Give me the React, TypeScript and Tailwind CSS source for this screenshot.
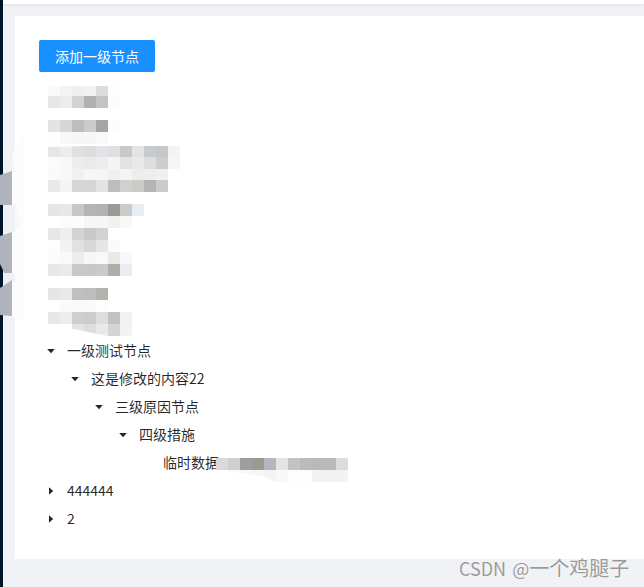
type TreeRow = {
  title: string;
  level: number;
  caret?: "down" | "right";
};

// each mosaic strip: top offset inside the blur block, then cell colours (12px wide)
const mosaicRows: { y: number; h?: number; cells: string[] }[] = [
  { y: 1, cells: ["#fafafa", "#f4f4f4", "#efefef", "#f1f2f3", "#dcdcdc", "#fdfdfe"] },
  { y: 11, cells: ["#e7e7e7", "#ececea", "#d3d2d1", "#b0b1b5", "#c3c3c5", "#fcfcfd"] },
  { y: 35, cells: ["#e4e4e4", "#d8d5d7", "#bcbdbc", "#cbccca", "#a5a5a7", "#fbfcfe"] },
  { y: 47, cells: ["#fefefe", "#f8f8f6", "#f6f6f6", "#f6f7f7", "#f9f9f9"] },
  { y: 61, h: 11, cells: ["#e6e6e6", "#eeecee", "#e0e0e1", "#dddcdb", "#e1e3e6", "#e1e0df", "#c9c9c9", "#e3e4e4", "#c8cbce", "#cac8c6", "#f3f4f6"] },
  { y: 72, cells: ["#fbfbfb", "#f9f8f9", "#ededed", "#ebeae9", "#ededef", "#f4f5f5", "#e2e3e4", "#e9e9e7", "#dcdee1", "#cfcdcb", "#f5f6f7"] },
  { y: 84, cells: ["#fafafa", "#f8f8f8", "#f0f0f0", "#f6f6f5", "#f5f5f3", "#f0f0f0", "#f4f4f2", "#eeedeb", "#edeeed", "#f0f0f2"] },
  { y: 95, cells: ["#e9e9e9", "#f4f4f2", "#d6d6d6", "#d8d6d5", "#e3e4e6", "#bcbebd", "#d2d0ce", "#cdcbc6", "#b4b4b4", "#c9ccce"] },
  { y: 119, cells: ["#e6e6e6", "#e9e8e7", "#c8c7c5", "#b3b3b8", "#b3b1b1", "#9b9a96", "#cbcbc8", "#e6eef3"] },
  { y: 131, cells: ["#ffffff", "#fbfbfb", "#fcfcfa", "#f6f6f6", "#f6f6f6", "#f1f1f1", "#f8f8f8"] },
  { y: 143, cells: ["#e8e8e8", "#f0eff0", "#d3d3d3", "#c8c9cb", "#d2d2d1"] },
  { y: 155, cells: ["#fdfdfd", "#f3f3f2", "#e1e1e1", "#d8d8d9", "#e6e7e4", "#f8fafb"] },
  { y: 167, cells: ["#fcfcfc", "#f9f9f8", "#eceded", "#f6f7f7", "#f9f9f9", "#eae9e9", "#f6f8fa"] },
  { y: 179, cells: ["#e8e8e8", "#ebebeb", "#c9c9c9", "#c8c8c8", "#c9caca", "#aeaea9", "#e9edf0"] },
  { y: 203, cells: ["#e6e6e6", "#e9e9e8", "#c1bfbd", "#bdbdc0", "#b4b2ae"] },
  { y: 215, cells: ["#ffffff", "#fafafa", "#f8f9f9", "#f9f9f8", "#fdfdfd"] },
  { y: 227, cells: ["#e8e8e8", "#eeedee", "#cfcecf", "#cbcccd", "#dcdddc", "#c3c2c0", "#f0f3f5"] },
  { y: 239, cells: ["#ffffff", "#fefefe", "#e3e4e5", "#dcddde", "#e8e9e9", "#d5d5d4", "#f1f3f5"] },
];

const leafCells = ["#dadadc", "#cfcfcd", "#9e9ea0", "#9b9992", "#b7b6bc", "#e4e4e4", "#c3c3c4", "#bbbcb8", "#bbb9b5", "#bababc", "#dcdcde"];
const leafCellsBottom = ["#fbfbfb", "#f8f8f8", "#f8f8f8", "#f6f6f6", "#f3f3f3", "#f7f8f8", "#fdfdfd", "#fcfdfd", "#f3f3f3", "#f2f2f2", "#f3f3f3"];

const rows: TreeRow[] = [
  { title: "一级测试节点", level: 0, caret: "down" },
  { title: "这是修改的内容22", level: 1, caret: "down" },
  { title: "三级原因节点", level: 2, caret: "down" },
  { title: "四级措施", level: 3, caret: "down" },
  { title: "临时数据", level: 4 },
  { title: "444444", level: 0, caret: "right" },
  { title: "2", level: 0, caret: "right" },
];

const Caret = ({ dir }: { dir: "down" | "right" }) => (
  <svg width="10" height="10" viewBox="0 0 10 10" className="fill-[#262626]">
    {dir === "down" ? <path d="M1.2 3 H8.8 L5 7.2 Z" /> : <path d="M3 1.2 V8.8 L7.2 5 Z" />}
  </svg>
);

const Mosaic = () => (
  <svg width="156" height="252" viewBox="0 0 156 252" className="block">
    <g shapeRendering="crispEdges">
      {mosaicRows.map((row) =>
        row.cells.map((c, i) => (
          <rect key={`${row.y}-${i}`} x={i * 12} y={row.y} width="12" height={row.h ?? 12} fill={c} />
        ))
      )}
    </g>
    {/* the white retouch edges that cut into the blur */}
    <path d="M0 60 L36 60 L36 61 L0 62 Z" fill="#ffffff" />
    <path d="M0 239 L60 251 L60 253 L0 253 Z" fill="#ffffff" />
    <path d="M96 131 L78 143 H96 Z" fill="#ffffff" />
  </svg>
);

const LeafMosaic = () => (
  <svg width="132" height="24" viewBox="0 0 132 24" className="block">
    <g shapeRendering="crispEdges">
      {leafCells.map((c, i) => (
        <rect key={i} x={i * 12} y="0" width="12" height="12" fill={c} />
      ))}
      {leafCellsBottom.map((c, i) => (
        <rect key={i} x={i * 12} y="12" width="12" height="12" fill={c} />
      ))}
    </g>
    <path d="M0 12 L48 18 L60 24 H0 Z" fill="#ffffff" />
  </svg>
);

// smeared edits sitting over the sidebar edge, drawn in page coordinates
const Smears = () => (
  <svg width="26" height="330" viewBox="0 0 26 330" className="absolute left-0 top-0">
    <path d="M24 135 L12 155 L13 165 L15 172 H12 V316 L24 320 Z" fill="#fcfcfd" />
    <path d="M3 205 H15 V232 H3 Z" fill="#eff1f5" />
    <path d="M15 205 L22 222 L15 232 Z" fill="#f7f8fa" />
    <path d="M0 175 L12 171 V205 H0 Z" fill="#aeb4ba" />
    <path d="M0 236 L12 232 V273 L5 275 L2 268 L0 264 Z" fill="#aeb4ba" />
    <path d="M3 273 H15 V282 H3 Z" fill="#eff1f5" />
    <path d="M0 288 L12 280 V316 L0 315 Z" fill="#aeb4ba" />
  </svg>
);

export default function App() {
  return (
    <div className="relative flex h-[587px] overflow-hidden bg-[#f0f2f5] font-['Noto_Sans_CJK_SC','Noto_Sans',sans-serif] text-[14px] text-[#000000d9]">
      <div className="w-[3px] shrink-0 bg-[#001529]" />

      <div className="flex min-w-0 flex-1 flex-col">
        <div className="h-[4px] shrink-0 bg-white shadow-[0_1px_4px_rgba(0,21,41,0.08)]" />

        <div className="mt-[12px] ml-[12px] h-[543px] bg-white p-[24px]">
          <button className="h-[32px] w-[116px] rounded-[2px] bg-[#1890ff] text-[14px] text-white">
            添加一级节点
          </button>

          <div className="mt-[13px] ml-[9px] h-[252px]">
            <Mosaic />
          </div>

          <div className="flex flex-col">
            {rows.map((row) => (
              <div
                key={row.title}
                className="flex h-[28px] items-center"
                style={{ paddingLeft: row.level * 24 }}
              >
                <span className="flex w-[24px] shrink-0 items-center justify-center">
                  {row.caret && <Caret dir={row.caret} />}
                </span>
                <span className="pb-[2px] pl-[4px] leading-[24px]">{row.title}</span>
                {row.level === 4 && (
                  <span className="mt-[14px] -ml-[3px]">
                    <LeafMosaic />
                  </span>
                )}
              </div>
            ))}
          </div>
        </div>
      </div>

      <Smears />

      <span className="absolute left-[459px] top-[556px] text-[18px] leading-[24px] text-[#9a9a9a] [word-spacing:2px] [text-shadow:0_0_1px_#ffffff]">
        CSDN @<span className="text-[20px]">一个鸡腿子</span>
      </span>
    </div>
  );
}
